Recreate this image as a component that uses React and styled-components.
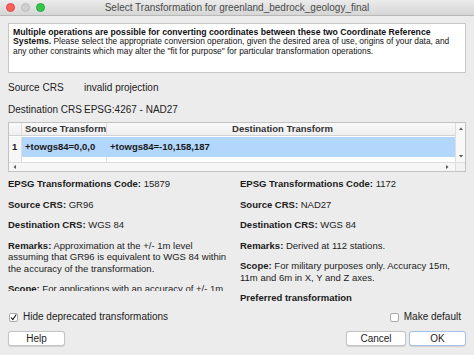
import React from 'react'
import styled, { createGlobalStyle } from 'styled-components'

const GlobalStyle = createGlobalStyle`
    html, body {
        margin: 0;
        padding: 0;
        background: #ececec;
    }
    body {
        font-family: "Liberation Sans", Arial, sans-serif;
        color: #1c1c1c;
    }
`

const details = {
    left: [
        { label: 'EPSG Transformations Code:', value: '15879' },
        { label: 'Source CRS:', value: 'GR96' },
        { label: 'Destination CRS:', value: 'WGS 84' },
        { label: 'Remarks:', value: 'Approximation at the +/- 1m level assuming that GR96 is equivalent to WGS 84 within the accuracy of the transformation.' },
        { label: 'Scope:', value: 'For applications with an accuracy of +/- 1m.' },
    ],
    right: [
        { label: 'EPSG Transformations Code:', value: '1172' },
        { label: 'Source CRS:', value: 'NAD27' },
        { label: 'Destination CRS:', value: 'WGS 84' },
        { label: 'Remarks:', value: 'Derived at 112 stations.' },
        { label: 'Scope:', value: 'For military purposes only. Accuracy 15m, 11m and 6m in X, Y and Z axes.' },
        { label: 'Preferred transformation', value: '' },
    ],
}

const Check = () => (
    <svg width="9" height="9" viewBox="0 0 9 9">
        <path d="M1.6 4.8 L3.6 7.2 L7.6 1.2" fill="none" stroke="#1a1a1a" strokeWidth="1.4" strokeLinecap="round" strokeLinejoin="round" />
    </svg>
)

const Arrow = ({ dir }) => {
    const d = {
        up: 'M1 4 L3 1.5 L5 4 Z',
        down: 'M1 2 L3 4.5 L5 2 Z',
        left: 'M4 1 L1.5 3 L4 5 Z',
        right: 'M2 1 L4.5 3 L2 5 Z',
    }[dir]
    return (
        <svg width="6" height="6" viewBox="0 0 6 6">
            <path d={d} fill="#555" />
        </svg>
    )
}

const App = () => {
    return (
        <>
            <GlobalStyle />
            <Window>
                <TitleBar>
                    <Lights>
                        <Light color="#fc605c" edge="#de4a45" />
                        <Light color="#d0d0d0" edge="#bcbcbc" />
                        <Light color="#34c84a" edge="#27a83a" />
                    </Lights>
                    <TitleText>Select Transformation for greenland_bedrock_geology_final</TitleText>
                </TitleBar>

                <Content>
                    <Intro>
                        <b>Multiple operations are possible for converting coordinates between these two Coordinate Reference Systems.</b>{' '}
                        Please select the appropriate conversion operation, given the desired area of use, origins of your data, and any other constraints which may alter the "fit for purpose" for particular transformation operations.
                    </Intro>

                    <CrsGrid>
                        <span>Source CRS</span>
                        <span>invalid projection</span>
                        <span>Destination CRS</span>
                        <span>EPSG:4267 - NAD27</span>
                    </CrsGrid>

                    <Table>
                        <View>
                            <HeaderRow>
                                <HeadCell />
                                <HeadCell>Source Transform</HeadCell>
                                <HeadCell center>Destination Transform</HeadCell>
                            </HeaderRow>
                            <DataRow>
                                <RowNum>1</RowNum>
                                <Cell>+towgs84=0,0,0</Cell>
                                <Cell>+towgs84=-10,158,187</Cell>
                            </DataRow>
                            <EmptyRow>
                                <RowNum />
                                <Cell plain />
                                <Cell plain />
                            </EmptyRow>
                        </View>
                        <VScroll>
                            <ScrollBtn><Arrow dir="up" /></ScrollBtn>
                            <ScrollBtn><Arrow dir="down" /></ScrollBtn>
                        </VScroll>
                        <HScroll>
                            <ScrollBtn><Arrow dir="left" /></ScrollBtn>
                            <ScrollBtn><Arrow dir="right" /></ScrollBtn>
                        </HScroll>
                        <Corner />
                    </Table>

                    <Details>
                        <Column maxH={113}>
                            {details.left.map(d => (
                                <Para key={d.label}><b>{d.label}</b> {d.value}</Para>
                            ))}
                        </Column>
                        <Column maxH={125}>
                            {details.right.map(d => (
                                <Para key={d.label}><b>{d.label}</b>{d.value && ' ' + d.value}</Para>
                            ))}
                        </Column>
                    </Details>

                    <Footer>
                        <CheckRow>
                            <Box><Check /></Box>
                            Hide deprecated transformations
                        </CheckRow>
                        <CheckRow end>
                            <Box />
                            Make default
                        </CheckRow>
                        <Button width={57}>Help</Button>
                        <Buttons>
                            <Button width={60}>Cancel</Button>
                            <Button width={57} primary>OK</Button>
                        </Buttons>
                    </Footer>
                </Content>
            </Window>
        </>
    )
}

const Window = styled.div`
    position: relative;
    width: 474px;
    height: 355px;
    overflow: hidden;
    display: flex;
    flex-direction: column;
    background: #ececec;
`

const TitleBar = styled.div`
    height: 15px;
    display: grid;
    grid-template-columns: 1fr auto 1fr;
    align-items: center;
    background: linear-gradient(#ebebeb, #d6d6d6);
    border-bottom: 1px solid #b8b8b8;
`

const Lights = styled.div`
    display: flex;
    gap: 5.5px;
    padding-left: 5.5px;
`

const Light = styled.span`
    width: 9.5px;
    height: 9.5px;
    border-radius: 50%;
    box-sizing: border-box;
    background: ${p => p.color};
    border: 0.5px solid ${p => p.edge};
`

const TitleText = styled.div`
    font-size: 10px;
    color: #4a4a4a;
    white-space: nowrap;
`

const Content = styled.div`
    padding: 7px 8px 0;
    display: flex;
    flex-direction: column;
`

const Intro = styled.div`
    height: 50px;
    box-sizing: border-box;
    background: #fff;
    border: 1px solid #c6c6c6;
    padding: 4px 4px;
    font-size: 8.4px;
    line-height: 9.4px;
    color: #111;

    b { font-size: 8.7px; }
`

const CrsGrid = styled.div`
    display: grid;
    grid-template-columns: auto 1fr;
    column-gap: 1px;
    row-gap: 8px;
    margin-top: 8px;
    font-size: 10px;
    line-height: 14px;
    color: #222;

    span:nth-child(1) { width: 75px; }
`

const Table = styled.div`
    margin-top: 5px;
    height: 50px;
    box-sizing: border-box;
    border: 1px solid #c2c2c2;
    background: #fff;
    display: grid;
    grid-template-columns: 1fr 10px;
    grid-template-rows: 1fr 9px;
`

const View = styled.div`
    display: flex;
    flex-direction: column;
    overflow: hidden;
`

const rowCols = `
    display: grid;
    grid-template-columns: 13px 85px 1fr;
`

const HeaderRow = styled.div`
    ${rowCols}
    height: 12px;
    background: linear-gradient(#fafafa, #efefef);
    border-bottom: 1px solid #d2d2d2;
`

const HeadCell = styled.div`
    font-size: 9.5px;
    font-weight: bold;
    line-height: 12px;
    color: #333;
    padding-left: 3px;
    white-space: nowrap;
    overflow: hidden;
    border-right: 1px solid #dcdcdc;
    text-align: ${p => (p.center ? 'center' : 'left')};
    &:last-child { border-right: none; }
`

const DataRow = styled.div`
    ${rowCols}
    height: 20px;
    margin-top: 1px;
`

const EmptyRow = styled.div`
    ${rowCols}
    flex: 1;
`

const RowNum = styled.div`
    background: #f7f7f7;
    border-right: 1px solid #dcdcdc;
    font-size: 9.5px;
    font-weight: bold;
    line-height: 20px;
    padding-left: 3px;
    color: #222;
`

const Cell = styled.div`
    background: ${p => (p.plain ? '#fff' : '#b2d6fc')};
    border-right: ${p => (p.plain ? '1px solid #e0e0e0' : 'none')};
    font-size: 9.5px;
    font-weight: bold;
    line-height: 20px;
    padding-left: 3px;
    white-space: nowrap;
    overflow: hidden;
    color: #1a1a1a;
    &:last-child { border-right: none; }
`

const VScroll = styled.div`
    grid-row: 1;
    grid-column: 2;
    display: flex;
    flex-direction: column;
    justify-content: space-between;
    align-items: center;
    background: #f8f8f8;
    border-left: 1px solid #dedede;
    padding: 3px 0 3px;
`

const HScroll = styled.div`
    grid-row: 2;
    grid-column: 1;
    display: flex;
    justify-content: space-between;
    align-items: center;
    background: #f6f6f6;
    border-top: 1px solid #dedede;
    padding: 0 5px 0 3px;
`

const ScrollBtn = styled.span`
    display: flex;
    line-height: 0;
`

const Corner = styled.div`
    grid-row: 2;
    grid-column: 2;
    background: #f2f2f2;
    border-top: 1px solid #dedede;
    border-left: 1px solid #dedede;
`

const Details = styled.div`
    display: grid;
    grid-template-columns: 227px 1fr;
    column-gap: 5px;
    margin-top: 6px;
    align-items: start;
`

const Column = styled.div`
    max-height: ${p => p.maxH}px;
    overflow: hidden;
    display: flex;
    flex-direction: column;
    gap: 9px;
`

const Para = styled.p`
    margin: 0;
    font-size: 9.5px;
    line-height: 11.5px;
    color: #222;
    b { color: #1a1a1a; }
`

const Footer = styled.div`
    position: absolute;
    left: 8px;
    right: 8px;
    top: 310px;
    display: grid;
    grid-template-columns: 1fr auto;
    row-gap: 7px;
    align-items: center;
`

const CheckRow = styled.label`
    display: flex;
    align-items: center;
    gap: 5px;
    font-size: 10px;
    color: #222;
    line-height: 14px;
    justify-self: ${p => (p.end ? 'end' : 'start')};
    padding-right: ${p => (p.end ? '5px' : '0')};
`

const Box = styled.span`
    width: 9px;
    height: 9px;
    box-sizing: border-box;
    border: 1px solid #ababab;
    border-radius: 2px;
    background: #fff;
    display: flex;
    align-items: center;
    justify-content: center;
    margin-left: 1px;
`

const Buttons = styled.div`
    display: flex;
    gap: 3px;
`

const Button = styled.button`
    width: ${p => p.width}px;
    height: 15px;
    padding: 0;
    box-sizing: border-box;
    font-family: inherit;
    font-size: 10px;
    color: #222;
    background: #fff;
    border: 1px solid ${p => (p.primary ? '#a9c1e3' : '#c4c4c4')};
    border-radius: 3px;
    box-shadow: 0 0.5px 1px rgba(0, 0, 0, 0.12);
`

export default App
